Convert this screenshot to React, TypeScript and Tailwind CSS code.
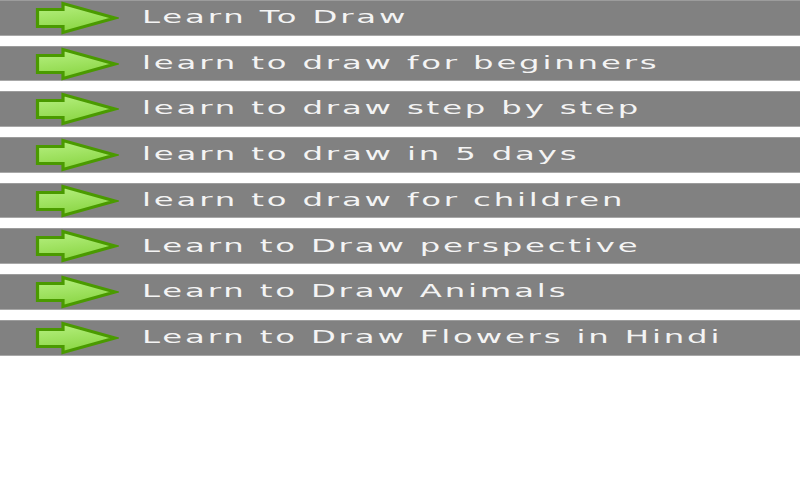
import React from "react";

const items = [
  "Learn To Draw",
  "learn to draw for beginners",
  "learn to draw step by step",
  "learn to draw in 5 days",
  "learn to draw for children",
  "Learn to Draw perspective",
  "Learn to Draw Animals",
  "Learn to Draw Flowers in Hindi",
];

function Arrow() {
  return (
    <svg width="84" height="34" viewBox="0 0 84 34" className="shrink-0">
      <defs>
        <linearGradient id="arrowFill" x1="0" y1="0" x2="0.3" y2="1">
          <stop offset="0" stopColor="#b8f183" />
          <stop offset="1" stopColor="#8bd645" />
        </linearGradient>
      </defs>
      <path
        d="M2.5 8.5 H28 V2.5 L80 17 L28 31.5 V25.5 H2.5 Z"
        fill="url(#arrowFill)"
        stroke="#4a9a00"
        strokeWidth="3.2"
        strokeLinejoin="miter"
      />
    </svg>
  );
}

export default function App() {
  return (
    <div className="w-[800px] h-[480px] bg-white overflow-hidden flex flex-col gap-[10px]">
      {items.map((t) => (
        <div
          key={t}
          className="h-[35.7px] shrink-0 bg-[#818181] border-t border-t-[#9c9c9c] border-b border-b-[#a8a8a8] flex items-center pl-[35px]"
        >
          <Arrow />
          <div className="ml-[23px] h-full flex items-center">
            <span
              className="origin-left [transform:scaleX(1.9)] inline-block whitespace-nowrap text-[17px] tracking-[1.5px] text-[#f4f4f4]"
              style={{ fontFamily: '"DejaVu Sans", sans-serif' }}
            >
              {t}
            </span>
          </div>
        </div>
      ))}
    </div>
  );
}
